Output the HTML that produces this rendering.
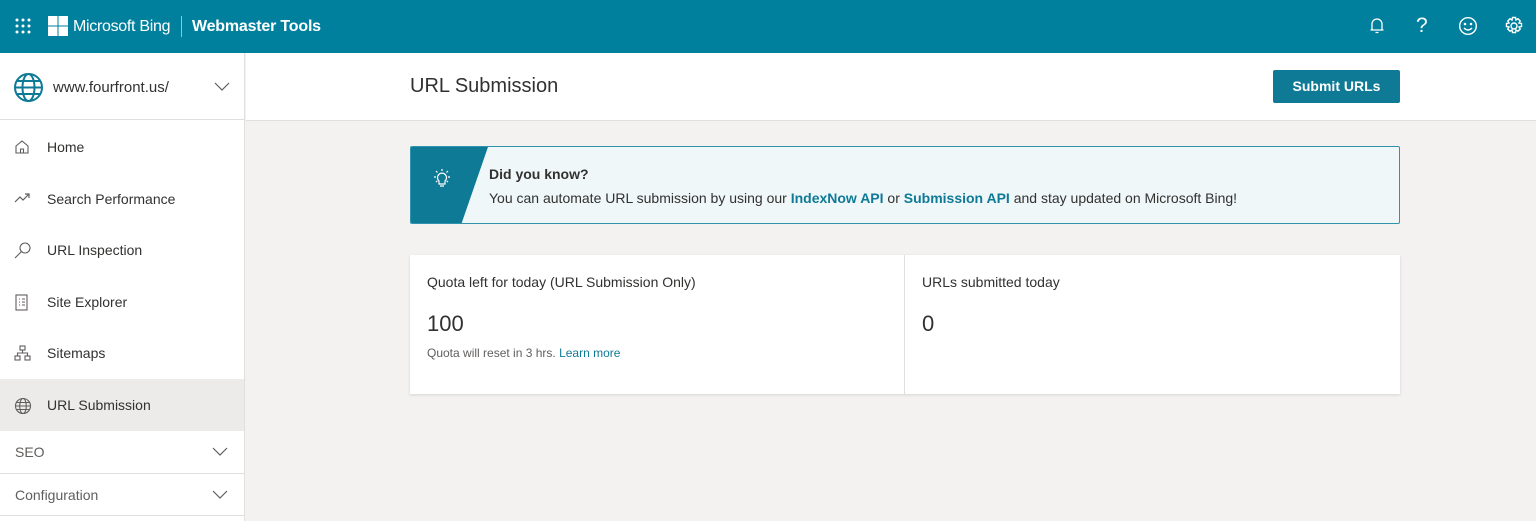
<!DOCTYPE html><html><head><style>
*{box-sizing:border-box;margin:0;padding:0}
body{width:1536px;height:521px;overflow:hidden;background:#f3f2f1;font-family:"Liberation Sans",sans-serif;color:#323130;position:relative}
.top{position:absolute;left:0;top:0;width:1536px;height:53px;background:#00809d;color:#fff}
.abs{position:absolute}
.side{position:absolute;left:0;top:53px;width:245px;height:468px;background:#fff;border-right:1px solid #e1dfdd}
.nav{position:absolute;left:0;width:244px;height:52px;font-size:14px;line-height:52px;padding-left:47px}
.nav svg{position:absolute;left:14px;top:18px}
.sec{position:absolute;left:0;width:244px;font-size:14px;color:#605e5c;padding-left:15px;border-bottom:1px solid #e1dfdd}
.chev{position:absolute;right:16px}
</style></head><body>
<div class="top">
<svg class="abs" style="left:14px;top:17px" width="18" height="18" fill="#fff"><circle cx="3" cy="3" r="1.5"/><circle cx="9" cy="3" r="1.5"/><circle cx="15" cy="3" r="1.5"/><circle cx="3" cy="9" r="1.5"/><circle cx="9" cy="9" r="1.5"/><circle cx="15" cy="9" r="1.5"/><circle cx="3" cy="15" r="1.5"/><circle cx="9" cy="15" r="1.5"/><circle cx="15" cy="15" r="1.5"/></svg>
<svg class="abs" style="left:48px;top:16px" width="20" height="20" fill="#fff"><rect width="9.5" height="9.5"/><rect x="10.5" width="9.5" height="9.5"/><rect y="10.5" width="9.5" height="9.5"/><rect x="10.5" y="10.5" width="9.5" height="9.5"/></svg>
<div class="abs" style="left:73px;top:18px;font-size:16px;letter-spacing:-0.3px">Microsoft Bing</div>
<div class="abs" style="left:181px;top:16px;width:1px;height:21px;background:#8fc6d3"></div>
<div class="abs" style="left:192px;top:18px;font-size:16px;font-weight:bold;letter-spacing:-0.2px">Webmaster Tools</div>
<svg class="abs" style="left:1369px;top:17px" width="16" height="18" fill="none" stroke="#fff" stroke-width="1.3"><path d="M3 13V7a5 5 0 0110 0v6H3zM1.5 13h13M6.5 15.5h3"/></svg>
<div class="abs" style="left:1416px;top:14px;font-size:21px">?</div>
<svg class="abs" style="left:1458px;top:16px" width="20" height="20" fill="none" stroke="#fff" stroke-width="1.4"><circle cx="10" cy="10" r="8.3"/><path d="M6 12q4 4 8 0"/><circle cx="7" cy="8" r=".6" fill="#fff"/><circle cx="13" cy="8" r=".6" fill="#fff"/></svg>
<svg class="abs" style="left:1504px;top:16px" width="20" height="20" fill="none" stroke="#fff" stroke-width="1.4"><circle cx="10" cy="10" r="3"/><path d="M8.5 1.5h3l.5 2.5 2-1.2 2.2 2.2-1.2 2 2.5.5v3l-2.5.5 1.2 2-2.2 2.2-2-1.2-.5 2.5h-3l-.5-2.5-2 1.2-2.2-2.2 1.2-2-2.5-.5v-3l2.5-.5-1.2-2 2.2-2.2 2 1.2z"/></svg>
</div>
<div class="side">
<div style="position:absolute;left:0;top:0;width:244px;height:67px;border-bottom:1px solid #e1dfdd">
<svg class="abs" style="left:13px;top:19px" width="31" height="31" fill="none" stroke="#0f7a96" stroke-width="2"><circle cx="15.5" cy="15.5" r="13.5"/><ellipse cx="15.5" cy="15.5" rx="6" ry="13.5"/><path d="M2 15.5h27M4 9h23M4 22h23"/></svg>
<div class="abs" style="left:53px;top:26px;font-size:15px">www.fourfront.us/</div>
<svg class="abs" style="left:214px;top:29px" width="16" height="9" fill="none" stroke="#605e5c" stroke-width="1.2"><path d="M1 1l7 7 7-7"/></svg>
</div>
<div class="nav" style="top:68px"><svg width="16" height="16" fill="none" stroke="#605e5c" stroke-width="1.1"><path d="M2 7l6-5 6 5v7H2zM6.5 14V10h3v4"/></svg>Home</div>
<div class="nav" style="top:120px"><svg width="18" height="16" fill="none" stroke="#605e5c" stroke-width="1.2"><path d="M1 11l5-5 3 3 6-6M11 3h4v4"/></svg>Search Performance</div>
<div class="nav" style="top:171px"><svg width="18" height="18" fill="none" stroke="#605e5c" stroke-width="1.1"><circle cx="11" cy="6" r="5"/><path d="M7.5 9.5L1 16"/></svg>URL Inspection</div>
<div class="nav" style="top:223px"><svg width="16" height="18" fill="none" stroke="#605e5c" stroke-width="1.1"><rect x="2" y="1" width="11" height="15"/><path d="M5 5h1M8 5h3M5 8h1M8 8h3M5 11h1M8 11h3"/></svg>Site Explorer</div>
<div class="nav" style="top:274px"><svg width="18" height="18" fill="none" stroke="#605e5c" stroke-width="1.1"><rect x="6" y="1" width="5" height="4"/><rect x="1" y="11" width="5" height="4"/><rect x="11" y="11" width="5" height="4"/><path d="M8.5 5v3M3.5 11V8h10v3"/></svg>Sitemaps</div>
<div class="nav" style="top:326px;background:#edebe9;height:52px"><svg width="18" height="18" fill="none" stroke="#605e5c" stroke-width="1.1"><circle cx="9" cy="9" r="7.5"/><ellipse cx="9" cy="9" rx="3.3" ry="7.5"/><path d="M1.5 9h15M2.5 5.5h13M2.5 12.5h13"/></svg>URL Submission</div>
<div class="sec" style="top:378px;height:43px;line-height:42px">SEO<svg class="chev" style="top:16px" width="16" height="9" fill="none" stroke="#605e5c" stroke-width="1.2"><path d="M1 1l7 7 7-7"/></svg></div>
<div class="sec" style="top:421px;height:42px;line-height:42px">Configuration<svg class="chev" style="top:16px" width="16" height="9" fill="none" stroke="#605e5c" stroke-width="1.2"><path d="M1 1l7 7 7-7"/></svg></div>
</div>
<div class="abs" style="left:246px;top:53px;width:1290px;height:68px;background:#fff;border-bottom:1px solid #e1dfdd"></div>
<div class="abs" style="left:410px;top:75px;font-size:20px">URL Submission</div>
<div class="abs" style="left:1273px;top:70px;width:127px;height:33px;background:#0f7a96;border-radius:2px;color:#fff;font-weight:bold;font-size:14px;text-align:center;line-height:33px">Submit URLs</div>
<div class="abs" style="left:410px;top:146px;width:990px;height:78px;background:#eff7f9;border:1px solid #2f93ad;border-radius:2px;overflow:hidden">
<svg class="abs" style="left:0;top:0" width="80" height="78"><path d="M0 0H77L50 78H0z" fill="#0f7a96"/><g fill="none" stroke="#fff" stroke-width="1.2"><path d="M28 34a4.5 4.5 0 116 0v3h-6z M29 39h4"/><path d="M31 22v2M23 30h2M37 30h2M25 24l1.5 1.5M37 24l-1.5 1.5M25 35l1.2-1M37 35l-1.2-1"/></g></svg>
<div class="abs" style="left:78px;top:19px;font-size:14px;font-weight:bold">Did you know?</div>
<div class="abs" style="left:78px;top:43px;font-size:14px">You can automate URL submission by using our <b style="color:#0f7a96">IndexNow API</b> or <b style="color:#0f7a96">Submission API</b> and stay updated on Microsoft Bing!</div>
</div>
<div class="abs" style="left:410px;top:255px;width:990px;height:139px;background:#fff;box-shadow:0 1px 3px rgba(0,0,0,.12)">
<div class="abs" style="left:494px;top:0;width:1px;height:139px;background:#e1dfdd"></div>
<div class="abs" style="left:17px;top:19px;font-size:14px">Quota left for today (URL Submission Only)</div>
<div class="abs" style="left:17px;top:56px;font-size:22px">100</div>
<div class="abs" style="left:17px;top:91px;font-size:12px;color:#605e5c">Quota will reset in 3 hrs. <span style="color:#0f7a96">Learn more</span></div>
<div class="abs" style="left:512px;top:19px;font-size:14px">URLs submitted today</div>
<div class="abs" style="left:512px;top:56px;font-size:22px">0</div>
</div>
</body></html>
